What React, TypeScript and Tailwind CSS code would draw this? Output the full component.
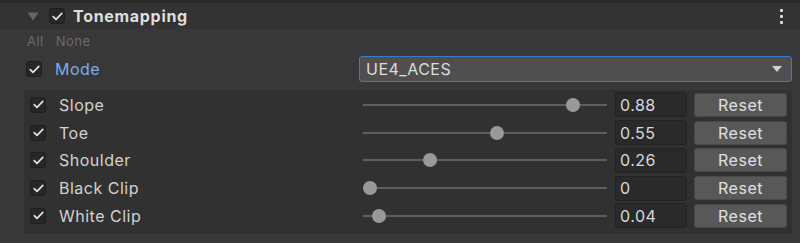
import React from "react";

const Check = ({ className = "" }: { className?: string }) => (
  <div
    className={`flex items-center justify-center rounded-[3px] border border-[#1f1f1f] bg-[#272727] ${className}`}
  >
    <svg width="11" height="9" viewBox="0 0 11 9" fill="none">
      <path d="M1.2 4.6 L4 7.4 L9.8 1.4" stroke="#e6e6e6" strokeWidth="1.6" strokeLinecap="round" strokeLinejoin="round" />
    </svg>
  </div>
);

const rows = [
  { label: "Slope", value: 0.88, text: "0.88" },
  { label: "Toe", value: 0.55, text: "0.55" },
  { label: "Shoulder", value: 0.26, text: "0.26" },
  { label: "Black Clip", value: 0, text: "0" },
  { label: "White Clip", value: 0.04, text: "0.04" },
];

export default function App() {
  return (
    <div
      className="w-[800px] h-[243px] bg-[#383838] text-[#d2d2d2] overflow-hidden flex flex-col"
      style={{ fontFamily: "Inter, 'Noto Sans', sans-serif" }}
    >
      <div className="h-[3px] bg-[#2a2a2a]" />
      {/* header */}
      <div className="h-[26px] bg-[#333333] flex items-center pl-[27px] pr-[17px]">
        <svg width="12" height="9" viewBox="0 0 12 9" className="mt-[1px]">
          <path d="M0.5 0.5 H11.5 L6 8.5 Z" fill="#666666" />
        </svg>
        <Check className="ml-[10px] w-[16px] h-[16px]" />
        <span className="ml-[8px] text-[16px] tracking-[0.7px] font-bold text-[#dedede] leading-none">Tonemapping</span>
        <div className="ml-auto flex flex-col gap-[3px]">
          <div className="w-[3px] h-[3px] bg-[#dcdcdc] rounded-[1px]" />
          <div className="w-[3px] h-[3px] bg-[#dcdcdc] rounded-[1px]" />
          <div className="w-[3px] h-[3px] bg-[#dcdcdc] rounded-[1px]" />
        </div>
      </div>
      {/* All None */}
      <div className="h-[25px] flex items-center pl-[27px] gap-[12px] text-[13px] tracking-[0.5px] text-[#6b6b6b]">
        <span>All</span>
        <span>None</span>
      </div>
      {/* Mode */}
      <div className="h-[29px] flex items-center pl-[26px] pr-[8px]">
        <Check className="w-[16px] h-[16px] mt-[1px]" />
        <span className="ml-[13px] mt-[1px] text-[16px] tracking-[0.5px] text-[#78aef0]">Mode</span>
        <div className="ml-auto w-[433px] h-[26px] rounded-[3px] border border-[#3a7bd0] bg-[#4f4f4f] flex items-center pl-[6px] pr-[9px]">
          <span className="text-[16px] tracking-[0.5px] text-[#dcdcdc]">UE4_ACES</span>
          <svg width="10" height="6" viewBox="0 0 10 6" className="ml-auto">
            <path d="M0 0 H10 L5 6 Z" fill="#d0d0d0" />
          </svg>
        </div>
      </div>
      {/* panel */}
      <div className="mt-[7px] ml-[24px] w-[768px] h-[144px] bg-[#313131] pt-[1px]">
        {rows.map((r) => (
          <div key={r.label} className="h-[27.75px] flex items-center pl-[6px]">
            <Check className="w-[16px] h-[16px]" />
            <span className="ml-[13px] w-[150px] text-[16px] tracking-[0.5px] text-[#d2d2d2]">{r.label}</span>
            <div className="ml-[154px] relative w-[244px] h-[14px] flex items-center">
              <div className="w-full h-[2px] bg-[#5e5e5e]" />
              <div
                className="absolute top-0 w-[14px] h-[14px] rounded-full bg-[#999999]"
                style={{ left: `${r.value * 231}px` }}
              />
            </div>
            <div className="ml-[8px] w-[72px] h-[25px] rounded-[3px] border border-[#222222] bg-[#2a2a2a] flex items-center pl-[4px] text-[16px] tracking-[0.5px] text-[#d8d8d8]">
              {r.text}
            </div>
            <div className="ml-[7px] w-[93px] h-[24px] rounded-[3px] bg-[#585858] border border-[#4a4a4a] flex items-center justify-center text-[16px] tracking-[0.5px] text-[#e0e0e0]">
              Reset
            </div>
          </div>
        ))}
      </div>
    </div>
  );
}
